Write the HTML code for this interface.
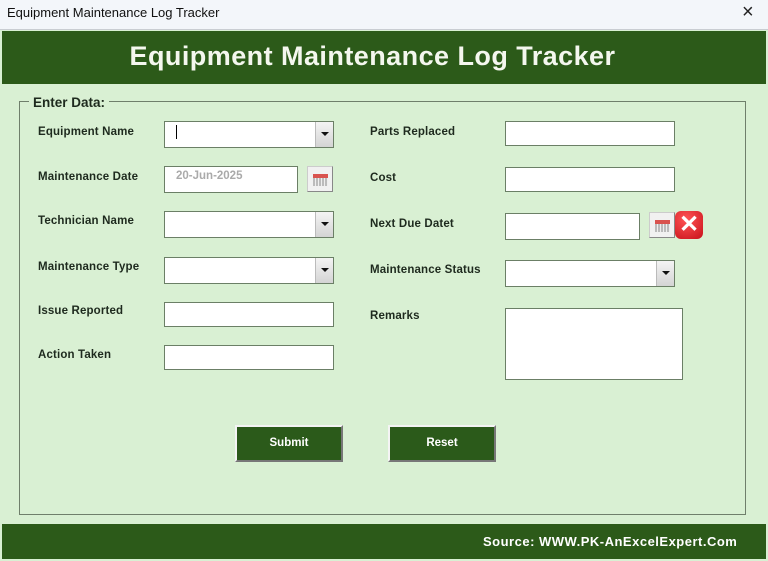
<!DOCTYPE html>
<html><head><style>
*{box-sizing:border-box;margin:0;padding:0}
body{width:768px;height:561px;position:relative;overflow:hidden;background:#d9f0d3;font-family:"Liberation Sans",Arial,sans-serif}
.a{position:absolute}
.lbl{position:absolute;font-size:11.5px;font-weight:bold;color:#1e2a1e;letter-spacing:0.15px}
.in{position:absolute;background:#fff;border:1px solid #6b7f66}
.dd{position:absolute;right:0;top:0;bottom:0;width:18px;background:linear-gradient(#f4f4f4,#d4d4d4);border-left:1px solid #bbb}
.dd:after{content:"";position:absolute;left:5px;top:10px;border-left:4px solid transparent;border-right:4px solid transparent;border-top:4px solid #111}
.cal{position:absolute;width:26px;height:26px;background:#f1f1f1;border:1px solid #ccc;border-right-color:#888;border-bottom-color:#888}
.cal:before{content:"";position:absolute;left:5px;top:7px;width:15px;height:4px;background:#d9534f}
.cal:after{content:"";position:absolute;left:5px;top:11px;width:15px;height:8px;background:repeating-linear-gradient(90deg,#bbb 0 2px,#eee 2px 3px)}
.btn{position:absolute;background:#2b5a1a;color:#fff;font-size:11.5px;font-weight:bold;text-align:center;line-height:33px;border:2px solid #f4f4f4;border-right-color:#777;border-bottom-color:#777}
</style></head><body>
<div class="a" style="left:0;top:0;width:768px;height:30px;background:#f3f6fa;border-bottom:1px solid #c9cdd2"></div>
<div class="a" style="left:7px;top:5px;color:#111;font-size:13px">Equipment Maintenance Log Tracker</div>
<div class="a" style="left:742px;top:1px;font-size:20px;color:#222">×</div>
<div class="a" style="left:2px;top:31px;width:764px;height:53px;background:#2c5a19"></div>
<div class="a" style="left:0;top:41px;width:745px;text-align:center;font-size:27px;font-weight:bold;color:#f4f7ee;letter-spacing:0.45px">Equipment Maintenance Log Tracker</div>
<div class="a" style="left:19px;top:101px;width:727px;height:414px;border:1px solid #6f7f6b"></div>
<div class="a" style="left:29px;top:95px;padding:0 4px;background:#d9f0d3;font-size:13.5px;font-weight:bold;color:#1e2a1e">Enter Data:</div>

<div class="lbl" style="left:38px;top:126px">Equipment Name</div>
<div class="in" style="left:164px;top:121px;width:170px;height:27px"><div class="a" style="left:11px;top:3px;width:1px;height:14px;background:#000"></div><div class="dd"></div></div>
<div class="lbl" style="left:38px;top:171px">Maintenance Date</div>
<div class="in" style="left:164px;top:166px;width:134px;height:27px;color:#aaa;font-size:11.5px;font-weight:bold;padding:3px 0 0 11px">20-Jun-2025</div>
<div class="cal" style="left:307px;top:166px"></div>
<div class="lbl" style="left:38px;top:215px">Technician Name</div>
<div class="in" style="left:164px;top:211px;width:170px;height:27px"><div class="dd"></div></div>
<div class="lbl" style="left:38px;top:261px">Maintenance Type</div>
<div class="in" style="left:164px;top:257px;width:170px;height:27px"><div class="dd"></div></div>
<div class="lbl" style="left:38px;top:305px">Issue Reported</div>
<div class="in" style="left:164px;top:302px;width:170px;height:25px"></div>
<div class="lbl" style="left:38px;top:349px">Action Taken</div>
<div class="in" style="left:164px;top:345px;width:170px;height:25px"></div>

<div class="lbl" style="left:370px;top:126px">Parts Replaced</div>
<div class="in" style="left:505px;top:121px;width:170px;height:25px"></div>
<div class="lbl" style="left:370px;top:172px">Cost</div>
<div class="in" style="left:505px;top:167px;width:170px;height:25px"></div>
<div class="lbl" style="left:370px;top:218px">Next Due Datet</div>
<div class="in" style="left:505px;top:213px;width:135px;height:27px"></div>
<div class="cal" style="left:649px;top:212px"></div>
<div class="a" style="left:675px;top:211px;width:28px;height:28px;border-radius:6px;background:radial-gradient(circle at 40% 30%,#f55,#c8101a);color:#fff;font-size:24px;font-weight:bold;text-align:center;line-height:28px">✕</div>
<div class="lbl" style="left:370px;top:264px">Maintenance Status</div>
<div class="in" style="left:505px;top:260px;width:170px;height:27px"><div class="dd"></div></div>
<div class="lbl" style="left:370px;top:310px">Remarks</div>
<div class="in" style="left:505px;top:308px;width:178px;height:72px"></div>

<div class="btn" style="left:235px;top:425px;width:108px;height:37px">Submit</div>
<div class="btn" style="left:388px;top:425px;width:108px;height:37px">Reset</div>

<div class="a" style="left:2px;top:524px;width:764px;height:35px;background:#2c5a19"></div>
<div class="a" style="left:483px;top:534px;font-size:13px;font-weight:bold;color:#fff;letter-spacing:0.5px">Source: WWW.PK-AnExcelExpert.Com</div>
</body></html>
